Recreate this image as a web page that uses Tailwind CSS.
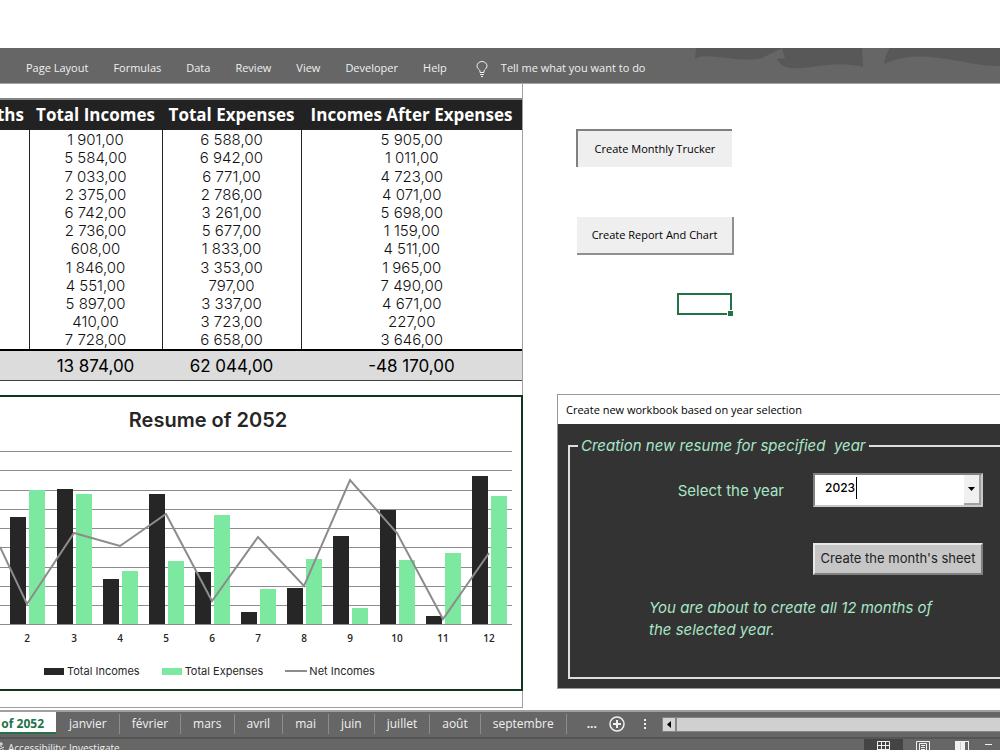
<!DOCTYPE html>
<html lang="en">

<head>
    <meta charset="UTF-8">
    <meta name="viewport" content="width=device-width, initial-scale=1.0">
    <title>Resume of 2052</title>
    <script src="https://cdn.jsdelivr.net/npm/@tailwindcss/browser@4"></script>
</head>

<body class="flex h-screen flex-col overflow-hidden bg-white font-['Open_Sans',sans-serif] text-black">
    <!-- Title strip -->
    <div class="h-12 shrink-0"></div>

    <!-- Ribbon -->
    <header class="flex h-9 shrink-0 items-stretch overflow-hidden border-b border-[#a6a6a6] bg-[#666666] pl-[26px] text-[11px] text-[#f0f0f0]">
        <nav class="flex shrink-0 items-center gap-[25px] pt-[6px]">
            <a href="#">Page Layout</a>
            <a href="#">Formulas</a>
            <a href="#">Data</a>
            <a href="#">Review</a>
            <a href="#">View</a>
            <a href="#">Developer</a>
            <a href="#">Help</a>
        </nav>
        <a href="#" class="ml-[29px] flex shrink-0 items-center gap-[13px] pt-[6px]">
            <svg class="h-4 w-3" viewBox="0 0 12 16" fill="none" stroke="#f0f0f0">
                <path d="M4 11.5V10C4 8.500 1 7.800 1 5a5 4.500 0 0 1 10 0c0 2.800-3 3.500-3 5v1.500z" />
                <path d="M4 13.500h4M5 15.500h2" />
            </svg>
            Tell me what you want to do
        </a>
        <svg class="ml-auto h-[35px] w-[310px] shrink-0" viewBox="0 0 310 35" fill="#585858">
            <path d="M6 0L5 11C12 6 24 9 38 10c14 2 26 2 34 0L92 0z" />
            <path d="M92 0L95 10 87 11c5 9 12 10 24 9 20-2 40-7 62-1L172 0z" />
            <path d="M200 0c-3 4-5 9-6 16 16-8 36-9 56-6 22 3 40 8 60 8V0z" />
        </svg>
    </header>

    <!-- Worksheet -->
    <main class="flex min-h-0 flex-1 overflow-hidden">
        <section class="flex w-[523px] shrink-0 flex-col self-start">
            <div class="border-r border-[#a0a0a0] py-[14px]">
                <table class="h-[283px] w-full table-fixed border-collapse text-center font-[Inter,sans-serif] text-[15px] leading-4 font-light text-[#111111]">
                    <colgroup>
                        <col class="w-[29px]">
                        <col class="w-[133px]">
                        <col class="w-[139px]">
                        <col>
                    </colgroup>
                    <thead class="border-t-2 border-[#858585]">
                        <tr class="h-[31px] bg-[#222222] font-['Open_Sans',sans-serif] text-[17px] leading-[18px] whitespace-nowrap text-white">
                            <th class="p-0 pb-px font-bold">
                                <div class="flex justify-end overflow-hidden pr-[5px]">Months</div>
                            </th>
                            <th class="p-0 pb-px font-bold">Total Incomes</th>
                            <th class="p-0 pb-px font-bold">Total Expenses</th>
                            <th class="p-0 pb-px font-bold">Incomes After Expenses</th>
                        </tr>
                    </thead>
                    <tbody id="months" class="[&_td]:border-r [&_td]:border-[#222222] [&_td]:p-0 [&_td]:pt-[2px] [&_td:last-child]:border-r-0"></tbody>
                    <tfoot>
                        <tr class="h-[31px] border-t-2 border-b border-t-black border-b-[#404040] bg-[#dcdcdc] text-[17px] font-normal text-black">
                            <td class="p-0 pt-[2px]"></td>
                            <td class="p-0 pt-[2px]">13 874,00</td>
                            <td class="p-0 pt-[2px]">62 044,00</td>
                            <td class="p-0 pt-[2px]">-48 170,00</td>
                        </tr>
                    </tfoot>
                </table>
            </div>

            <!-- Chart -->
            <figure class="flex h-[296px] flex-col border-y-2 border-r-2 border-[#12351f] font-[Inter,sans-serif] text-[#262626]">
                <h2 class="pt-[9px] pr-[105px] text-center text-[20px] leading-7 font-semibold">Resume of 2052</h2>
                <svg id="chart" class="h-[216px] w-full" viewBox="0 434 521 216" font-family="Open Sans, sans-serif" font-size="10" font-weight="600" fill="#262626" text-anchor="middle"></svg>
                <figcaption class="flex items-center gap-[22px] pt-[13px] pl-11 text-[11px] leading-4">
                    <span class="flex items-center gap-[3px]"><i class="h-[7px] w-5 bg-[#262626]"></i>Total Incomes</span>
                    <span class="flex items-center gap-[3px]"><i class="h-[7px] w-5 bg-[#7de8a0]"></i>Total Expenses</span>
                    <span class="flex items-center gap-[2px]"><i class="h-[2px] w-[22px] bg-[#8c8c8c]"></i>Net Incomes</span>
                </figcaption>
            </figure>
            <div class="h-[17px] border-r border-b border-[#a0a0a0]"></div>
        </section>

        <section class="flex min-w-0 flex-1 flex-col items-start">
            <button class="mt-[45px] ml-[53px] h-[38px] w-[156px] border-t-2 border-l-2 border-[#808080] bg-[#efefef] text-[11px]">Create Monthly Trucker</button>
            <button class="mt-[50px] ml-[54px] h-[38px] w-[157px] border-r-2 border-b-2 border-[#909090] bg-[#efefef] text-[11px]">Create Report And Chart</button>
            <!-- Selected cell -->
            <div class="relative mt-[38px] ml-[154px] h-[22px] w-[55px] border-2 border-[#217346]">
                <span class="absolute -right-[3px] -bottom-[3px] size-[6px] border-t border-l border-white bg-[#217346]"></span>
            </div>

            <!-- Year form -->
            <form class="mt-[79px] ml-[34px] flex h-[295px] flex-col self-stretch border border-r-0 border-[#999999] bg-[#333333] font-[Inter,sans-serif] text-[15px] text-[#a9e6c8]">
                <h3 class="h-[29px] shrink-0 bg-white pl-2 font-['Open_Sans',sans-serif] text-[11px] leading-[29px] text-black">Create new workbook based on year selection</h3>
                <fieldset class="mt-[11px] mb-[9px] ml-[10px] flex-1 border-2 border-r-0 border-[#dedede]">
                    <legend class="ml-2 px-[3px] leading-[22px] whitespace-pre italic">Creation new resume for specified  year</legend>
                    <div class="grid grid-cols-[214px_170px] items-center gap-x-[29px] gap-y-9 pt-4">
                        <label for="year" class="pt-[2px] text-right">Select the year</label>
                        <div class="relative h-[34px]">
                            <select id="year" class="size-full appearance-none border-2 border-[#c8c8c8] border-t-[#808080] border-l-[#808080] bg-white pb-1 pl-[10px] text-[12px] font-medium text-black">
                                <option>2023</option>
                                <option>2024</option>
                            </select>
                            <span class="absolute top-1 left-[43px] h-[22px] w-px bg-black"></span>
                            <span class="pointer-events-none absolute top-[2px] right-[2px] flex h-[30px] w-[17px] items-center justify-center border-r-2 border-b-2 border-[#a0a0a0] bg-[#f0f0f0]">
                                <svg class="h-1 w-[7px]" viewBox="0 0 7 4"><path d="M0 0h7L3.500 4z" /></svg>
                            </span>
                        </div>
                        <button type="button" class="col-start-2 h-8 border-2 border-[#808080] border-t-[#e8e8e8] border-l-[#e8e8e8] bg-[#c6c6c6] text-[13px] whitespace-nowrap text-[#222222]">Create the month's sheet</button>
                    </div>
                    <p class="mt-[22px] ml-[79px] w-[295px] leading-[22px] italic">You are about to create all 12 months of the selected year.</p>
                </fieldset>
            </form>
        </section>
    </main>

    <!-- Sheet tabs -->
    <div class="flex h-[27px] shrink-0 items-start border-t-2 border-[#a0a0a0] bg-[#666666] text-[12px] whitespace-nowrap text-[#f0f0f0]">
        <a href="#" class="flex h-[22px] w-14 shrink-0 items-center justify-end overflow-hidden border-b-2 border-[#217346] bg-white pt-[3px] pr-3 font-bold text-[#217346]">Resume of 2052</a>
        <nav class="mt-[2px] ml-px flex h-5 shrink-0 items-center [&>a]:border-r [&>a]:border-[#8c8c8c] [&>a]:px-3 [&>a]:leading-5">
            <a href="#">janvier</a>
            <a href="#">février</a>
            <a href="#">mars</a>
            <a href="#">avril</a>
            <a href="#">mai</a>
            <a href="#">juin</a>
            <a href="#">juillet</a>
            <a href="#">août</a>
            <a href="#">septembre</a>
        </nav>
        <div class="flex h-6 min-w-0 flex-1 items-center pl-5">
            <button class="leading-5 font-bold">...</button>
            <button class="ml-3 shrink-0" aria-label="New sheet">
                <svg class="size-4" viewBox="0 0 16 16" fill="none" stroke="#f0f0f0">
                    <circle cx="8" cy="8" r="7" stroke-width="1.500" />
                    <path d="M8 4v8M4 8h8" stroke-width="2" />
                </svg>
            </button>
            <svg class="mr-4 ml-[19px] h-3 w-[2px] shrink-0" viewBox="0 0 2 12" fill="#f0f0f0"><path d="M0 1h2v2H0zM0 5h2v2H0zM0 9h2v2H0z" /></svg>
            <button class="flex h-[15px] w-[14px] shrink-0 items-center justify-center border border-[#858585] bg-[#d4d4d4]" aria-label="Scroll left">
                <svg class="h-[7px] w-1" viewBox="0 0 4 7"><path d="M4 0v7L0 3.500z" /></svg>
            </button>
            <div class="h-[15px] flex-1 border border-r-0 border-[#858585] bg-[#d0d0d0]"></div>
        </div>
    </div>

    <!-- Status bar -->
    <footer class="flex h-[13px] shrink-0 items-start overflow-hidden border-t-2 border-[#555555] bg-[#666666] text-[#f0f0f0]">
        <svg class="mt-[2px] h-3 w-[5px]" viewBox="0 0 5 12" fill="none" stroke="#f0f0f0"><path d="M0 3h3M1 1v5M0 8l4-2M3 8v3" /></svg>
        <span class="ml-[3px] text-[10px] leading-[18px] font-medium">Accessibility: Investigate</span>
        <div class="ml-auto flex">
            <span class="flex w-[39px] justify-center bg-[#444444] pt-[2px]">
                <svg class="h-3 w-[13px]" viewBox="0 0 13 12" fill="none" stroke="#f0f0f0"><path d="M.5.5h12v11H.5zM4.500 0v12M8.500 0v12M0 4.500h13M0 8.500h13" /></svg>
            </span>
            <span class="flex w-[39px] justify-center pt-[2px]">
                <svg class="h-3 w-[14px]" viewBox="0 0 14 12" fill="none" stroke="#f0f0f0"><path d="M.5 12V.5h13V12M3.500 12V2.500h7V12M5 4.500h4M5 6.500h4M5 8.500h4" /></svg>
            </span>
            <span class="flex w-[39px] justify-center pt-[2px]">
                <svg class="h-3 w-[14px]" viewBox="0 0 14 12" fill="#f0f0f0"><path d="M0 0h14v12h-1V1h-3v8H9V1H5.500v8H1v3H0z" /><path d="M1 1h3.500v8H1zM5.500 1H9v8H5.500z" /></svg>
            </span>
            <span class="w-[19px] pt-[5px] pl-1"><i class="block h-px w-[7px] bg-[#f0f0f0]"></i></span>
        </div>
    </footer>
</body>

<script>
    const months = [
        ["1 901,00", "6 588,00", "5 905,00"],
        ["5 584,00", "6 942,00", "1 011,00"],
        ["7 033,00", "6 771,00", "4 723,00"],
        ["2 375,00", "2 786,00", "4 071,00"],
        ["6 742,00", "3 261,00", "5 698,00"],
        ["2 736,00", "5 677,00", "1 159,00"],
        ["608,00", "1 833,00", "4 511,00"],
        ["1 846,00", "3 353,00", "1 965,00"],
        ["4 551,00", "797,00", "7 490,00"],
        ["5 897,00", "3 337,00", "4 671,00"],
        ["410,00", "3 723,00", "227,00"],
        ["7 728,00", "6 658,00", "3 646,00"],
    ];
    document.getElementById("months").innerHTML = months
        .map((row) => `<tr><td></td>${row.map((v) => `<td>${v}</td>`).join("")}</tr>`)
        .join("");

    // Top of each bar and point, months 2 to 12
    const base = 624;
    const incomes = [517, 489, 579, 494, 572, 612, 588, 536, 510, 616, 476];
    const expenses = [490, 494, 571, 561, 515, 589, 559, 608, 560, 553, 496];
    const net = [604, 533, 546, 514, 601, 537, 586, 480, 533, 619, 553];
    const center = (i) => Math.round(27.4 + i * 46.15);

    let svg = "";
    for (let i = 0; i < 10; i++) {
        svg += `<path d="M0 ${Math.round(451 + i * 19.25)}.5H512" stroke="#8c8c8c"/>`;
    }
    incomes.forEach((top, i) => {
        const x = center(i);
        svg += `<rect x="${x - 17}" y="${top}" width="16" height="${base - top}" fill="#262626"/>`;
        svg += `<rect x="${x + 2}" y="${expenses[i]}" width="16" height="${base - expenses[i]}" fill="#7de8a0"/>`;
        svg += `<text x="${x}" y="642">${i + 2}</text>`;
    });
    svg += `<polyline fill="none" stroke="#8c8c8c" stroke-width="2" points="0,547 ${net.map((y, i) => `${center(i)},${y}`).join(" ")}"/>`;
    document.getElementById("chart").innerHTML = svg;
</script>

</html>
